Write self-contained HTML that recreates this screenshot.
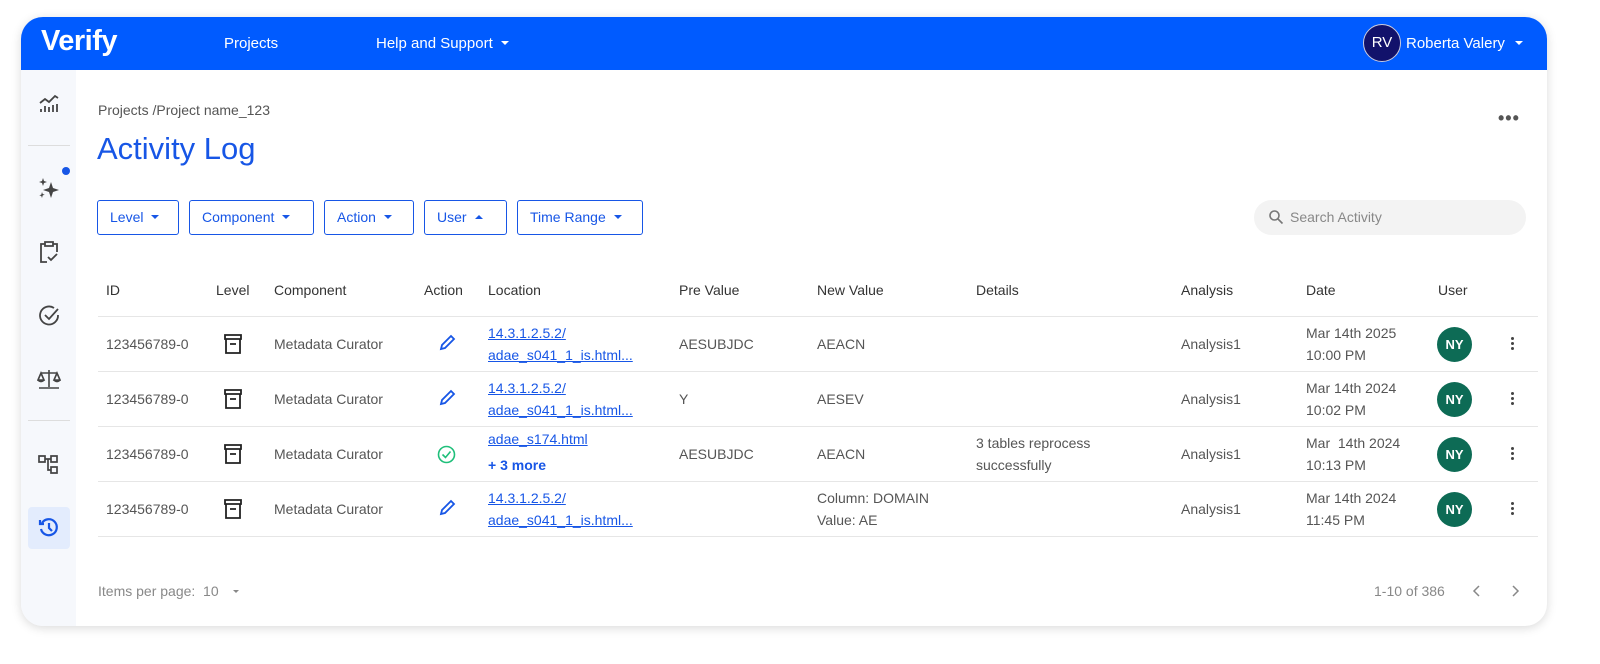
<!DOCTYPE html>
<html><head><style>
*{box-sizing:border-box;margin:0;padding:0}
body{width:1600px;height:664px;background:#fff;font-family:"Liberation Sans",sans-serif;position:relative;overflow:hidden}
.card{position:absolute;left:21px;top:17px;width:1526px;height:609px;border-radius:22px;overflow:hidden;background:#fff;box-shadow:0 2px 10px rgba(0,0,0,.15)}
.hdr{position:absolute;left:0;top:0;width:100%;height:53px;background:#005bff;color:#fff}
.side{position:absolute;left:0;top:53px;width:55px;bottom:0;background:#f6f8fc}
.a{position:absolute;white-space:nowrap}
.btn{position:absolute;top:200px;height:35px;border:1px solid #1756e6;border-radius:3px;color:#1756e6;font-size:14px;line-height:33px;padding-left:12px}
.tri{display:inline-block;width:0;height:0;border-left:4px solid transparent;border-right:4px solid transparent;border-top:4px solid currentColor;vertical-align:middle;margin-left:8px;margin-top:-2px}
.th{position:absolute;top:282px;font-size:14px;color:#333}
.line{position:absolute;left:98px;width:1440px;height:1px;background:#e6e6e6}
.c{position:absolute;font-size:14px;color:#555;line-height:22px}
.lk{color:#1756e6;text-decoration:underline}
.av{position:absolute;left:1437px;width:35px;height:35px;border-radius:50%;background:#0d6b55;color:#fff;font-size:13px;font-weight:bold;text-align:center;line-height:35px}
.kb{position:absolute;left:1511px;width:3px}
.kb i{display:block;width:3px;height:3px;border-radius:50%;background:#444;margin-bottom:2px}
</style></head><body>
<div class="card">
 <div class="hdr">
  <div class="a" style="left:20px;top:8px;font-size:29px;font-weight:bold;letter-spacing:-0.5px">Verify</div>
  <div class="a" style="left:203px;top:18px;font-size:15px">Projects</div>
  <div class="a" style="left:355px;top:18px;font-size:15px">Help and Support<span class="tri"></span></div>
  <div class="a" style="left:1342px;top:7px;width:38px;height:38px;border-radius:50%;background:#12126b;border:1.5px solid #ccd;font-size:15px;text-align:center;line-height:35px">RV</div>
  <div class="a" style="left:1385px;top:18px;font-size:15px">Roberta Valery<span class="tri" style="margin-left:10px"></span></div>
 </div>
 <div class="side">
  <svg class="a" style="left:17px;top:24px" width="22" height="20" viewBox="0 0 22 20" fill="none" stroke="#444" stroke-width="1.8"><path d="M2 9l5-4 4 3 6-6 3 2M3 18v-3M7 18v-6M11 18v-5M15 18v-7M19 18v-8"/></svg>
  <div class="a" style="left:7px;top:75px;width:42px;height:1px;background:#ddd"></div>
  <svg class="a" style="left:16px;top:106px" width="24" height="24" viewBox="0 0 24 24" fill="#444"><path d="M14 6l2 6 6 2-6 2-2 6-2-6-6-2 6-2z M6 2l1 3 3 1-3 1-1 3-1-3-3-1 3-1z M5 16l.7 2 2 .7-2 .7L5 22l-.7-2-2-.7 2-.7z"/></svg>
  <div class="a" style="left:41px;top:97px;width:8px;height:8px;border-radius:50%;background:#1756e6"></div>
  <svg class="a" style="left:17px;top:170px" width="22" height="24" viewBox="0 0 22 24" fill="none" stroke="#444" stroke-width="1.8"><path d="M7 4H3v18h6M15 4h4v8M7 2h8v4H7zM10 17l3 3 6-6"/></svg>
  <svg class="a" style="left:16px;top:234px" width="24" height="24" viewBox="0 0 24 24" fill="none" stroke="#444" stroke-width="1.8"><path d="M21 11a9 9 0 1 1-4-7M8 11l4 4 9-10"/></svg>
  <svg class="a" style="left:16px;top:298px" width="24" height="22" viewBox="0 0 24 22" fill="none" stroke="#444" stroke-width="1.6"><path d="M12 2v17M4 5h16M2 20h20M4 5l-3 7h6zM20 5l-3 7h6zM1 12q3 3 6 0M17 12q3 3 6 0"/></svg>
  <div class="a" style="left:7px;top:350px;width:42px;height:1px;background:#ddd"></div>
  <svg class="a" style="left:17px;top:383px" width="22" height="22" viewBox="0 0 22 22" fill="none" stroke="#444" stroke-width="1.7"><path d="M1 3h6v6H1zM13 3h6v6h-6zM13 14h6v6h-6zM7 6h6M10 6v11h3"/></svg>
  <div class="a" style="left:7px;top:437px;width:42px;height:42px;border-radius:4px;background:#e3ecfd"></div>
  <svg class="a" style="left:17px;top:447px" width="22" height="22" viewBox="0 0 22 22" fill="none" stroke="#1756e6" stroke-width="2.2"><path d="M4 6a8 8 0 1 1-1 6M2 3v4h4M11 6v5l3 3"/></svg>
 </div>
</div>
<div class="a" style="left:98px;top:102px;font-size:14px;color:#555">Projects /Project name_123</div>
<div class="a" style="left:97px;top:131px;font-size:31px;color:#1756e6">Activity Log</div>
<div class="a" style="left:1498px;top:108px;font-size:18px;color:#555;letter-spacing:1px;font-weight:bold">•••</div>
<div class="btn" style="left:97px;width:82px">Level<span class="tri"></span></div>
<div class="btn" style="left:189px;width:125px">Component<span class="tri"></span></div>
<div class="btn" style="left:324px;width:90px">Action<span class="tri"></span></div>
<div class="btn" style="left:424px;width:83px">User<span class="tri" style="border-top:0;border-bottom:4px solid currentColor"></span></div>
<div class="btn" style="left:517px;width:126px">Time Range<span class="tri"></span></div>
<div class="a" style="left:1254px;top:200px;width:272px;height:35px;border-radius:18px;background:#f3f3f3"></div>
<svg class="a" style="left:1268px;top:209px" width="16" height="16" viewBox="0 0 16 16" fill="none" stroke="#777" stroke-width="1.6"><circle cx="6.5" cy="6.5" r="4.5"/><path d="M10 10l4.5 4.5"/></svg>
<div class="a" style="left:1290px;top:209px;font-size:14px;color:#888">Search Activity</div>

<div class="th" style="left:106px">ID</div><div class="th" style="left:216px">Level</div><div class="th" style="left:274px">Component</div><div class="th" style="left:424px">Action</div><div class="th" style="left:488px">Location</div><div class="th" style="left:679px">Pre Value</div><div class="th" style="left:817px">New Value</div><div class="th" style="left:976px">Details</div><div class="th" style="left:1181px">Analysis</div><div class="th" style="left:1306px">Date</div><div class="th" style="left:1438px">User</div>
<div class="line" style="top:316px"></div><div class="line" style="top:371px"></div><div class="line" style="top:426px"></div><div class="line" style="top:481px"></div><div class="line" style="top:536px"></div>

<div class="c" style="left:106px;top:333px">123456789-0</div><div class="c" style="left:274px;top:333px">Metadata Curator</div>
<div class="c" style="left:106px;top:388px">123456789-0</div><div class="c" style="left:274px;top:388px">Metadata Curator</div>
<div class="c" style="left:106px;top:443px">123456789-0</div><div class="c" style="left:274px;top:443px">Metadata Curator</div>
<div class="c" style="left:106px;top:498px">123456789-0</div><div class="c" style="left:274px;top:498px">Metadata Curator</div>
<svg class="a" style="left:224px;top:334px" width="18" height="20" viewBox="0 0 18 20" fill="none" stroke="#222" stroke-width="1.8"><path d="M1 1h16v4H1zM2 5v14h14V5M6 10h6"/></svg>
<svg class="a" style="left:224px;top:389px" width="18" height="20" viewBox="0 0 18 20" fill="none" stroke="#222" stroke-width="1.8"><path d="M1 1h16v4H1zM2 5v14h14V5M6 10h6"/></svg>
<svg class="a" style="left:224px;top:444px" width="18" height="20" viewBox="0 0 18 20" fill="none" stroke="#222" stroke-width="1.8"><path d="M1 1h16v4H1zM2 5v14h14V5M6 10h6"/></svg>
<svg class="a" style="left:224px;top:499px" width="18" height="20" viewBox="0 0 18 20" fill="none" stroke="#222" stroke-width="1.8"><path d="M1 1h16v4H1zM2 5v14h14V5M6 10h6"/></svg>
<svg class="a" style="left:438px;top:334px" width="18" height="18" viewBox="0 0 18 18" fill="none" stroke="#1756e6" stroke-width="1.8"><path d="M3 15l1-4 9-9 3 3-9 9z"/></svg>
<svg class="a" style="left:438px;top:389px" width="18" height="18" viewBox="0 0 18 18" fill="none" stroke="#1756e6" stroke-width="1.8"><path d="M3 15l1-4 9-9 3 3-9 9z"/></svg>
<svg class="a" style="left:437px;top:445px" width="19" height="19" viewBox="0 0 19 19" fill="none" stroke="#1fbf7a" stroke-width="1.6"><circle cx="9.5" cy="9.5" r="8"/><path d="M5.5 9.5l3 3 5-6"/></svg>
<svg class="a" style="left:438px;top:499px" width="18" height="18" viewBox="0 0 18 18" fill="none" stroke="#1756e6" stroke-width="1.8"><path d="M3 15l1-4 9-9 3 3-9 9z"/></svg>
<div class="c lk" style="left:488px;top:322px">14.3.1.2.5.2/<br>adae_s041_1_is.html...</div>
<div class="c lk" style="left:488px;top:377px">14.3.1.2.5.2/<br>adae_s041_1_is.html...</div>
<div class="c lk" style="left:488px;top:428px">adae_s174.html</div>
<div class="c" style="left:488px;top:454px;color:#1756e6;font-weight:bold">+ 3 more</div>
<div class="c lk" style="left:488px;top:487px">14.3.1.2.5.2/<br>adae_s041_1_is.html...</div>
<div class="c" style="left:679px;top:333px">AESUBJDC</div><div class="c" style="left:679px;top:388px">Y</div><div class="c" style="left:679px;top:443px">AESUBJDC</div>
<div class="c" style="left:817px;top:333px">AEACN</div><div class="c" style="left:817px;top:388px">AESEV</div><div class="c" style="left:817px;top:443px">AEACN</div><div class="c" style="left:817px;top:487px">Column: DOMAIN<br>Value: AE</div>
<div class="c" style="left:976px;top:432px">3 tables reprocess<br>successfully</div>
<div class="c" style="left:1181px;top:333px">Analysis1</div><div class="c" style="left:1181px;top:388px">Analysis1</div><div class="c" style="left:1181px;top:443px">Analysis1</div><div class="c" style="left:1181px;top:498px">Analysis1</div>
<div class="c" style="left:1306px;top:322px">Mar 14th 2025<br>10:00 PM</div>
<div class="c" style="left:1306px;top:377px">Mar 14th 2024<br>10:02 PM</div>
<div class="c" style="left:1306px;top:432px">Mar&nbsp; 14th 2024<br>10:13 PM</div>
<div class="c" style="left:1306px;top:487px">Mar 14th 2024<br>11:45 PM</div>
<div class="av" style="top:327px">NY</div><div class="av" style="top:382px">NY</div><div class="av" style="top:437px">NY</div><div class="av" style="top:492px">NY</div>
<div class="kb" style="top:337px"><i></i><i></i><i></i></div><div class="kb" style="top:392px"><i></i><i></i><i></i></div><div class="kb" style="top:447px"><i></i><i></i><i></i></div><div class="kb" style="top:502px"><i></i><i></i><i></i></div>

<div class="a" style="left:98px;top:583px;font-size:14px;color:#888">Items per page:&nbsp; 10 <span class="tri" style="margin-left:10px;border-width:3px 3px 0"></span></div>
<div class="a" style="left:1374px;top:583px;font-size:14px;color:#888">1-10 of 386</div>
<svg class="a" style="left:1472px;top:585px" width="10" height="12" viewBox="0 0 10 12" fill="none" stroke="#888" stroke-width="1.5"><path d="M7 1L2 6l5 5"/></svg>
<svg class="a" style="left:1510px;top:585px" width="10" height="12" viewBox="0 0 10 12" fill="none" stroke="#888" stroke-width="1.5"><path d="M3 1l5 5-5 5"/></svg>
</body></html>
